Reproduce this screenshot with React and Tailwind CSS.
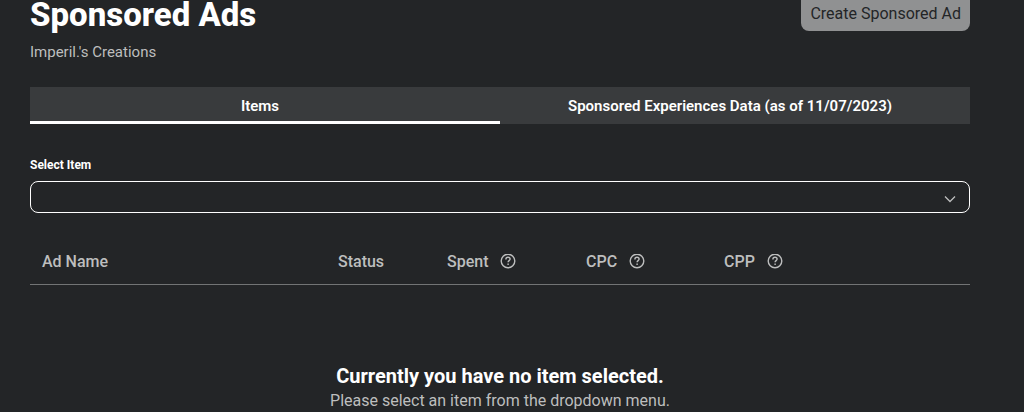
import React from 'react';

const columns = [
  { label: 'Ad Name', width: 'w-[296px]' },
  { label: 'Status', width: 'w-[109px]' },
  { label: 'Spent', width: 'w-[139px]', help: true },
  { label: 'CPC', width: 'w-[138px]', help: true },
  { label: 'CPP', width: '', help: true },
];

function HelpIcon() {
  return (
    <svg className="h-4 w-4" viewBox="0 0 16 16" fill="none" stroke="currentColor" strokeWidth="1.4" aria-hidden="true">
      <circle cx="8" cy="7" r="6.8" />
      <path d="M5.9 5.4c0-1.4.9-2.1 2.1-2.1s2.1.7 2.1 1.8c0 1.5-2 1.6-2 3.2" />
      <path d="M7.4 10.3h1.4" />
    </svg>
  );
}

export default function App() {
  return (
    <main className="min-h-screen bg-[#232527] pl-[30px] pr-[54px] font-['Roboto','Noto_Sans',sans-serif] text-base text-[#bdbebe]">
      {/* Header */}
      <header className="flex items-start justify-between">
        <div>
          <h1 className="text-[33px] leading-[30px] font-extrabold text-white">Sponsored Ads</h1>
          <p className="mt-[10px] text-[15px] leading-6">Imperil.'s Creations</p>
        </div>
        <button type="button" disabled className="h-[31px] rounded-b-lg bg-[#909192] px-[9px] pb-[3px] text-[#232527]">
          Create Sponsored Ad
        </button>
      </header>

      {/* Tabs */}
      <div role="tablist" className="mt-[23px] grid h-[37px] grid-cols-2 bg-[#393b3d] text-[15px] font-semibold text-white">
        <button type="button" role="tab" aria-selected="true" className="border-b-3 border-white pt-[5px] pr-[10px]">
          Items
        </button>
        <button type="button" role="tab" aria-selected="false" className="pt-[2px] pr-[10px]">
          Sponsored Experiences Data (as of 11/07/2023)
        </button>
      </div>

      {/* Item picker */}
      <div className="mt-8 flex flex-col">
        <label htmlFor="item" className="text-xs leading-[18px] font-bold text-white">Select Item</label>
        <div className="mt-[7px] grid items-center">
          <select id="item" className="col-start-1 row-start-1 h-8 w-full appearance-none rounded-lg border border-white bg-transparent px-3 text-white" />
          <svg className="pointer-events-none col-start-1 row-start-1 mt-1 mr-[14px] h-3 w-3 justify-self-end" viewBox="0 0 12 12" fill="none" stroke="currentColor" strokeWidth="1.3" aria-hidden="true">
            <path d="M1 3.5l5 5 5-5" />
          </svg>
        </div>
      </div>

      {/* Ads */}
      <table className="mt-6 w-full table-fixed border-collapse">
        <thead>
          <tr className="h-[47px] border-b border-[#727475]">
            {columns.map((column) => (
              <th key={column.label} scope="col" className={`${column.width} pt-1 pl-3 text-left font-medium`}>
                <span className="flex items-center gap-3">
                  {column.label}
                  {column.help && <HelpIcon />}
                </span>
              </th>
            ))}
          </tr>
        </thead>
      </table>

      {/* Empty state */}
      <section className="mt-[78px] text-center">
        <h2 className="text-xl leading-[26px] font-bold text-white">Currently you have no item selected.</h2>
        <p className="leading-6">Please select an item from the dropdown menu.</p>
      </section>
    </main>
  );
}
